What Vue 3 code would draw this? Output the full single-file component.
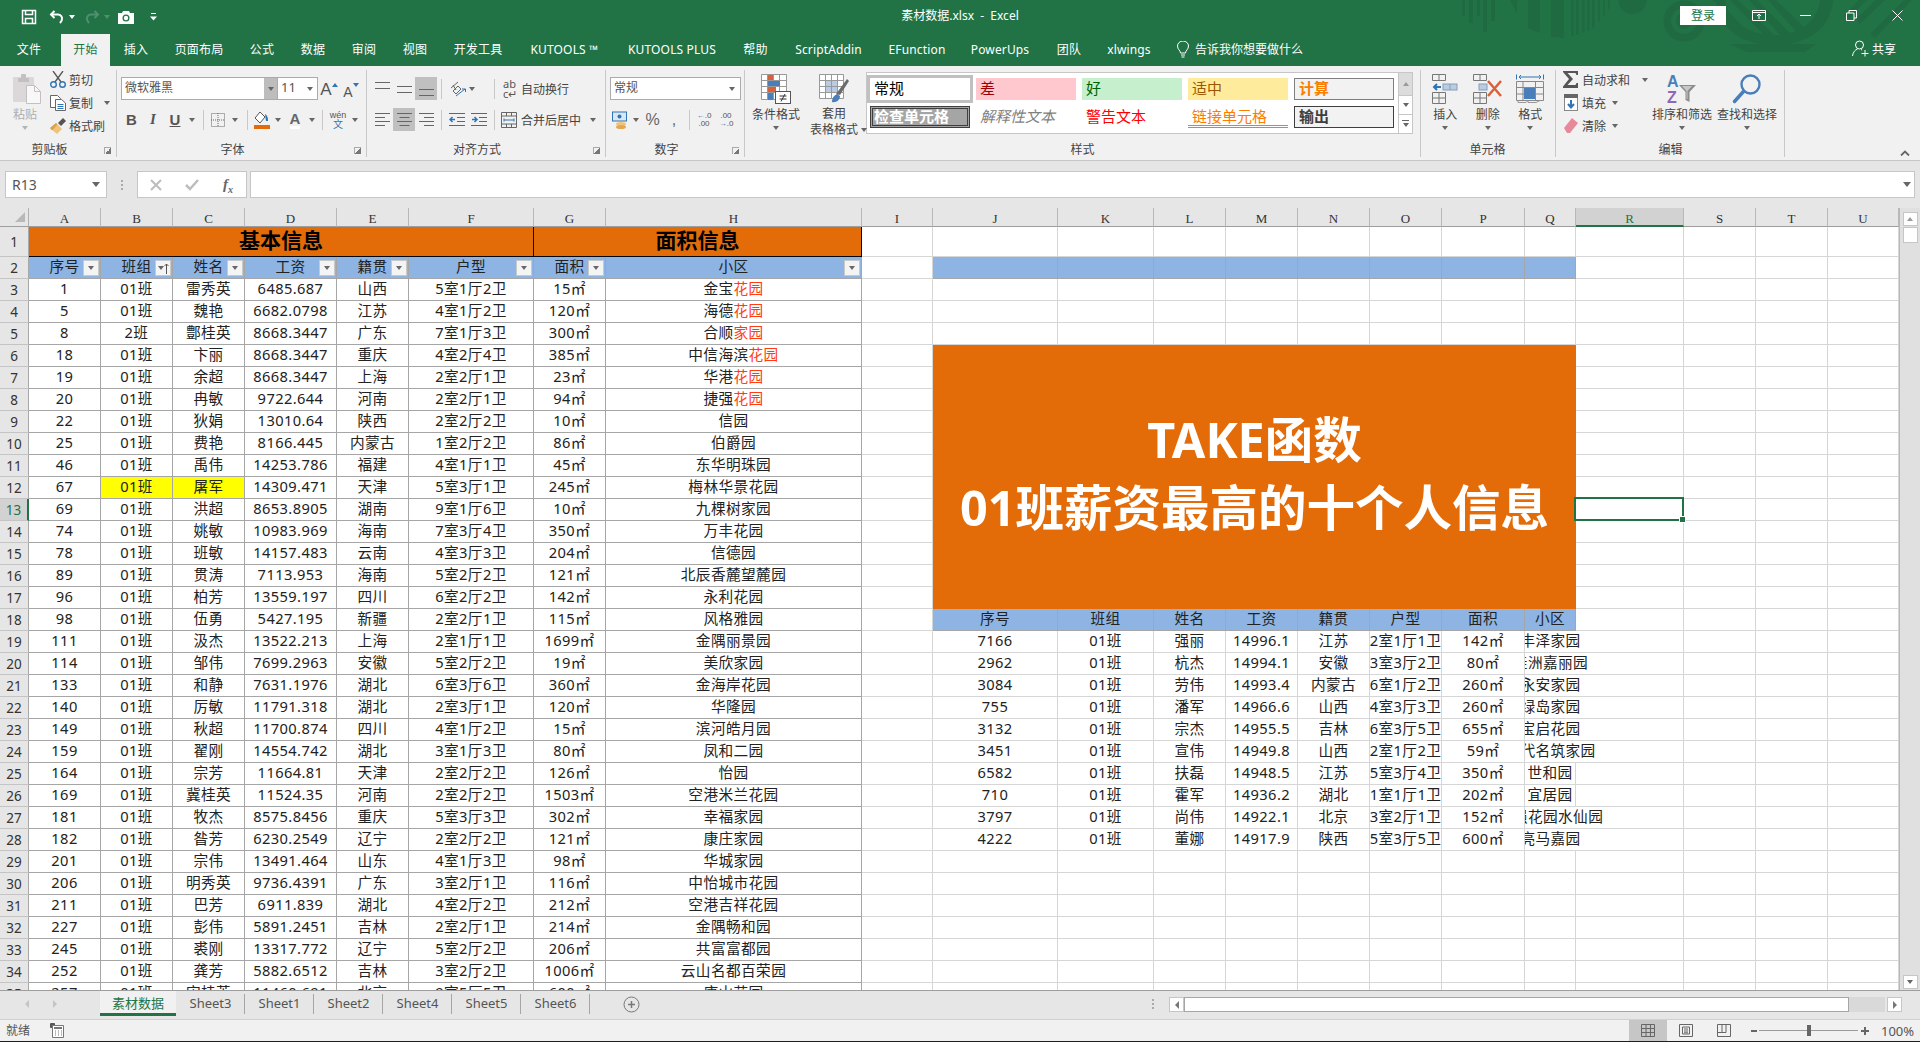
<script setup>
const tabs = [
  { name: '文件', w: 58 }, { name: '开始', w: 49, on: true }, { name: '插入', w: 48 }, { name: '页面布局', w: 74 },
  { name: '公式', w: 48 }, { name: '数据', w: 50 }, { name: '审阅', w: 48 }, { name: '视图', w: 50 },
  { name: '开发工具', w: 72 }, { name: 'KUTOOLS ™', w: 97 }, { name: 'KUTOOLS PLUS', w: 114 }, { name: '帮助', w: 49 },
  { name: 'ScriptAddin', w: 93 }, { name: 'EFunction', w: 80 }, { name: 'PowerUps', w: 82 }, { name: '团队', w: 52 },
  { name: 'xlwings', w: 64 }
]

const letters = 'ABCDEFGHIJKLMNOPQRSTU'.split('')

const sheetTabs = ['Sheet3', 'Sheet1', 'Sheet2', 'Sheet4', 'Sheet5', 'Sheet6']

// 素材数据 rows 3..35
const source = `1,01班,雷秀英,6485.687,山西,5室1厅2卫,15㎡,金宝,花园
5,01班,魏艳,6682.0798,江苏,4室1厅2卫,120㎡,海德,花园
8,2班,鄷桂英,8668.3447,广东,7室1厅3卫,300㎡,合顺,家园
18,01班,卞丽,8668.3447,重庆,4室2厅4卫,385㎡,中信海滨,花园
19,01班,余超,8668.3447,上海,2室2厅1卫,23㎡,华港,花园
20,01班,冉敏,9722.644,河南,2室2厅1卫,94㎡,捷强,花园
22,01班,狄娟,13010.64,陕西,2室2厅2卫,10㎡,信园
25,01班,费艳,8166.445,内蒙古,1室2厅2卫,86㎡,伯爵园
46,01班,禹伟,14253.786,福建,4室1厅1卫,45㎡,东华明珠园
67,01班,屠军,14309.471,天津,5室3厅1卫,245㎡,梅林华景花园
69,01班,洪超,8653.8905,湖南,9室1厅6卫,10㎡,九棵树家园
74,01班,姚敏,10983.969,海南,7室3厅4卫,350㎡,万丰花园
78,01班,班敏,14157.483,云南,4室3厅3卫,204㎡,信德园
89,01班,贯涛,7113.953,海南,5室2厅2卫,121㎡,北辰香麓望麓园
96,01班,柏芳,13559.197,四川,6室2厅2卫,142㎡,永利花园
98,01班,伍勇,5427.195,新疆,2室2厅1卫,115㎡,风格雅园
111,01班,汲杰,13522.213,上海,2室1厅1卫,1699㎡,金隅丽景园
114,01班,邹伟,7699.2963,安徽,5室2厅2卫,19㎡,美欣家园
133,01班,和静,7631.1976,湖北,6室3厅6卫,360㎡,金海岸花园
140,01班,厉敏,11791.318,湖北,2室3厅1卫,120㎡,华隆园
149,01班,秋超,11700.874,四川,4室1厅2卫,15㎡,滨河皓月园
159,01班,翟刚,14554.742,湖北,3室1厅3卫,80㎡,凤和二园
164,01班,宗芳,11664.81,天津,2室2厅2卫,126㎡,怡园
169,01班,冀桂英,11524.35,河南,2室2厅2卫,1503㎡,空港米兰花园
181,01班,牧杰,8575.8456,重庆,5室3厅3卫,302㎡,幸福家园
182,01班,昝芳,6230.2549,辽宁,2室2厅2卫,121㎡,康庄家园
201,01班,宗伟,13491.464,山东,4室1厅3卫,98㎡,华城家园
206,01班,明秀英,9736.4391,广东,3室2厅1卫,116㎡,中怡城市花园
211,01班,巴芳,6911.839,湖北,4室2厅2卫,212㎡,空港吉祥花园
227,01班,彭伟,5891.2451,吉林,2室2厅1卫,214㎡,金隅畅和园
245,01班,裘刚,13317.772,辽宁,5室2厅2卫,206㎡,共富富都园
252,01班,龚芳,5882.6512,吉林,3室2厅2卫,1006㎡,云山名都百荣园
257,01班,宋桂英,11460.691,北京,9室5厅5卫,600㎡,康山花园`.split('\n').map(l => l.split(','))

// TAKE result, rows 19..28, columns J..Q
const result = `7166,01班,强丽,14996.1,江苏,2室1厅1卫,142㎡,丰泽家园
2962,01班,杭杰,14994.1,安徽,3室3厅2卫,80㎡,佳洲嘉丽园
3084,01班,劳伟,14993.4,内蒙古,6室1厅2卫,260㎡,永安家园
755,01班,潘军,14966.6,山西,4室3厅3卫,260㎡,绿岛家园
3132,01班,宗杰,14955.5,吉林,6室3厅5卫,655㎡,宝启花园
3451,01班,宣伟,14949.8,山西,2室1厅2卫,59㎡,现代名筑家园
6582,01班,扶磊,14948.5,江苏,5室3厅4卫,350㎡,世和园
710,01班,霍军,14936.2,湖北,1室1厅1卫,202㎡,宜居园
3797,01班,尚伟,14922.1,北京,3室2厅1卫,152㎡,金强花园水仙园
4222,01班,董娜,14917.9,陕西,5室3厅5卫,600㎡,亮马嘉园`.split('\n').map(l => l.split(','))

const srcHead = ['序号', '班组', '姓名', '工资', '籍贯', '户型', '面积', '小区']

function buildRow(n) {
  const cells = []
  const blank = count => { for (let i = 0; i < count; i++) cells.push({ text: '' }) }

  if (n === 1) {
    cells.push({ text: '基本信息', cls: 'title-cell span6' })
    cells.push({ text: '面积信息', cls: 'title-cell span2' })
    blank(13)
  } else if (n === 2) {
    srcHead.forEach((t, i) => cells.push({ text: t, cls: 'head', filter: i === 1 ? 'sort' : 'plain' }))
    blank(1)
    for (let i = 0; i < 8; i++) cells.push({ text: '', cls: 'head' })
    blank(4)
  } else {
    const d = source[n - 3]
    d.slice(0, 7).forEach((t, i) => cells.push({ text: t, cls: n === 12 && (i === 1 || i === 2) ? 'tb yellow' : 'tb' }))
    cells.push({ text: d[7], red: d.length > 8 ? d[8] : '', cls: 'tb' })
    blank(1)
    if (n === 6) {
      cells.push({ picture: true })
    } else if (n > 6 && n < 18) {
      // covered by the picture
    } else if (n === 18) {
      srcHead.forEach(t => cells.push({ text: t, cls: 'head' }))
    } else if (n > 18 && n < 29) {
      const r = result[n - 19]
      r.forEach((t, i) => cells.push({ text: t, cls: i === 7 ? (t.length > 3 ? 'spill nob' : 'spill') : '' }))
    } else {
      blank(8)
    }
    cells.push({ text: '', cls: n === 13 ? 'selected' : '' })
    blank(3)
  }
  return { n, cells }
}

const rows = []
for (let n = 1; n <= 35; n++) rows.push(buildRow(n))
</script>

<template>
  <div class="excel">
    <!-- title bar + tab strip share the green band -->
    <header class="band">
      <svg class="band-art" width="480" height="66" viewBox="0 0 480 66">
        <g fill="#1f6a41">
          <rect x="22" y="0" width="3" height="16" /><rect x="29" y="0" width="4" height="23" /><rect x="37" y="0" width="3" height="16" />
          <rect x="43" y="0" width="4" height="32" /><rect x="51" y="0" width="4" height="21" />
          <path d="M70 0h7v14zM88 0h12v33l-12-5z" />
          <path d="M111 0h13v38l-13-1z" />
          <path d="M131 0h2.500v36l-2.500 .5zM136 0h2.500v34l-2.500 1zM142 0h2.500v32l-2.500 1zM147 0h2.500v30l-2.500 1.500zM152 0h2.500v27l-2.500 2zM158 0h2v20l-2 3zM163 0h2v14l-2 3zM168 0h2v7l-2 3z" />
          <circle cx="192.500" cy="0" r="14" />
          <path fill-rule="evenodd" d="M244 0.500a20.500 20.500 0 1 0 .01 0zM244 8a13 13 0 1 1 -.01 0z" />
          <circle cx="244" cy="21" r="8" />
          <circle cx="244" cy="21" r="4.500" fill="#217346" />
          <path d="M272 0h6c8 18 20 34 38 41l-28-30zM290 0h8l45 44h-10zM309 0h8l40 40-9 4zM328 0h8l32 31-7 6z" />
          <path d="M272 0h4c4 30 26 45 59 45s56-17 58-45h-13c-2 21-20 35-45 35s-48-13-50-35z" />
          <path d="M290 44h86l-11 8h-58z" />
          <path d="M404 15l15-15h8l-19 19zM416 19l20-19h9l-25 24zM430 34l34-34h8l-37 38z" />
        </g>
      </svg>

      <div class="titlebar">
        <div class="qat">
          <svg width="16" height="16" viewBox="0 0 16 16" fill="none" stroke="#fff" stroke-width="1.500"><path d="M1.500 1.500h13v13h-13z" /><path d="M4.500 1.500v4h7v-4" /><path d="M4.500 14.500v-5h7v5" /></svg>
          <span class="qat-undo">
            <svg width="16" height="14" viewBox="0 0 16 14" fill="none" stroke="#fff" stroke-width="2"><path d="M5.500 1l-3.500 3.500 3.500 3.500" /><path d="M2 4.500h7a4 4 0 0 1 4 4.500c0 1.500-1 3-2 4" /></svg>
            <i class="caret white"></i>
          </span>
          <span class="qat-redo">
            <svg width="16" height="14" viewBox="0 0 16 14" fill="none" stroke="#4f9070" stroke-width="2"><path d="M10.500 1l3.500 3.500-3.500 3.500" /><path d="M14 4.500h-7a4 4 0 0 0-4 4.500c0 1.500 1 3 2 4" /></svg>
            <i class="caret dim"></i>
          </span>
          <svg class="qat-cam" width="16" height="14" viewBox="0 0 16 14"><path fill="#fff" d="M0 3h4l1-2h6l1 2h4v11h-16z" /><circle cx="8" cy="8" r="3.500" fill="#217346" /><circle cx="8" cy="8" r="2.200" fill="#fff" /></svg>
          <svg class="qat-more" width="7" height="9" viewBox="0 0 7 9" fill="#fff"><rect x="1" y="0" width="5" height="1" /><path d="M0 3.500h7l-3.500 4z" /></svg>
        </div>
        <div class="doc-name">素材数据.xlsx&nbsp; - &nbsp;Excel</div>
        <div class="win">
          <span class="login">登录</span>
          <span class="win-btn">
            <svg width="14" height="11" viewBox="0 0 14 11" fill="none" stroke="#fff"><path d="M.5 .5h13v10h-13z" /><path d="M.5 2.500h13" /><path d="M7 9v-5M5 6l2-2 2 2" /></svg>
          </span>
          <span class="win-btn"><svg width="11" height="11" viewBox="0 0 11 11" stroke="#fff"><path d="M0 5.500h11" /></svg></span>
          <span class="win-btn">
            <svg width="11" height="11" viewBox="0 0 11 11" fill="none" stroke="#fff"><path d="M.5 3h7.500v7.500h-7.500z" /><path d="M3 3v-2.500h7.500v7.500h-2.500" /></svg>
          </span>
          <span class="win-btn"><svg width="11" height="11" viewBox="0 0 11 11" stroke="#fff"><path d="M.5 .5l10 10M10.500 .5l-10 10" /></svg></span>
        </div>
      </div>

      <nav class="tabstrip">
        <span v-for="t in tabs" :key="t.name" class="tab" :class="{ on: t.on }" :style="{ width: t.w + 'px' }">{{ t.name }}</span>
        <span class="tell">
          <svg width="12" height="17" viewBox="0 0 12 17" fill="none" stroke="#fff"><path d="M3.500 12c0-2.500-3-3.500-3-7a5.500 5 0 0 1 11 0c0 3.500-3 4.500-3 7z" /><path d="M4 14h4M4.500 16h3" /></svg>
          告诉我你想要做什么
        </span>
        <span class="share">
          <svg width="17" height="17" viewBox="0 0 17 17" fill="none" stroke="#fff"><circle cx="7.500" cy="5" r="4" /><path d="M.5 16c.5-4 2.500-6 5-7M9 9.500l1 .5" /><path d="M13 10v6.500M9.500 13.500h7" /></svg>
          共享
        </span>
      </nav>
    </header>

    <!-- ribbon -->
    <section class="ribbon">
      <div class="group g-clip">
        <div class="body row">
          <div class="big paste">
            <svg width="28" height="30" viewBox="0 0 28 30">
              <rect x="0" y="3" width="21" height="25" rx="1" fill="#dcd8da" />
              <path d="M5 4h11v4h-11z" fill="#c4c0c2" /><rect x="8" y="0" width="5" height="5" rx="1" fill="#c4c0c2" />
              <path d="M13.500 11.500h8l6 6v12h-14z" fill="#f8f8f8" stroke="#c4c0c2" /><path d="M21.500 11.500v6h6" fill="none" stroke="#c4c0c2" />
            </svg>
            <span class="big-text muted">粘贴</span>
            <i class="caret light"></i>
          </div>
          <div class="smalls">
            <div class="small">
              <svg width="16" height="17" viewBox="0 0 16 17" fill="none"><path d="M3 0l8 11M13 0l-8 11" stroke="#555" stroke-width="1.300" /><circle cx="3.500" cy="13.500" r="2.800" stroke="#2f75b5" stroke-width="1.400" /><circle cx="12.500" cy="13.500" r="2.800" stroke="#2f75b5" stroke-width="1.400" /></svg>
              <span>剪切</span>
            </div>
            <div class="small">
              <svg width="16" height="16" viewBox="0 0 16 16" fill="#fff" stroke="#666"><path d="M.5 .5h7l3 3v9h-10z" /><path d="M5.500 4.500h6l4 3.500v7.500h-10z" /><path d="M7.500 9.500h6M7.500 11.500h6M7.500 13.500h6" stroke="#2f75b5" /></svg>
              <span>复制</span>
              <i class="caret gap16"></i>
            </div>
            <div class="small">
              <svg width="16" height="16" viewBox="0 0 16 16"><path d="M0 10l6-5 6 6-5 5z" fill="#f0c27a" /><path d="M0 10l6-5 1.500 1.500-5.500 6z" fill="#d9a24d" /><path d="M8 5l5-5 3 3-5 5z" fill="#555" /></svg>
              <span>格式刷</span>
            </div>
          </div>
        </div>
        <div class="label">剪贴板<i class="launch"></i></div>
      </div>

      <div class="group g-font">
        <div class="body rows">
          <div class="tool-row">
            <div class="combo font-name"><span class="combo-text">微软雅黑</span><span class="combo-drop"><i class="caret"></i></span></div>
            <div class="combo font-size"><span class="combo-text">11</span><i class="caret"></i></div>
            <span class="slot w22 grow-a">A<svg width="6" height="4" viewBox="0 0 6 4"><path d="M0 4l3-4 3 4z" fill="#2f75b5" /></svg></span>
            <span class="slot w22 grow-a small-a">A<svg width="6" height="4" viewBox="0 0 6 4"><path d="M0 0l3 4 3-4z" fill="#2f75b5" /></svg></span>
          </div>
          <div class="tool-row">
            <span class="slot w21 letter bold">B</span>
            <span class="slot w22 letter ital">I</span>
            <span class="slot w22 letter under">U</span>
            <span class="slot w12"><i class="caret"></i></span>
            <span class="slot w11"><i class="sep"></i></span>
            <span class="slot w18">
              <svg width="14" height="14" viewBox="0 0 14 14" fill="none" stroke="#666" stroke-dasharray="1 1"><path d="M.5 .5h13v13h-13zM7 0v14M0 7h14" /></svg>
            </span>
            <span class="slot w16"><i class="caret"></i></span>
            <span class="slot w8"><i class="sep"></i></span>
            <span class="slot w21">
              <svg width="16" height="18" viewBox="0 0 16 18"><path d="M6 1l5 5-5 6-5-5z" fill="#fff" stroke="#555" /><path d="M11 3c2 1 3 3 3 7h-2z" fill="#2f75b5" /><rect x="0" y="14" width="16" height="4" fill="#e36c09" /></svg>
            </span>
            <span class="slot w12"><i class="caret"></i></span>
            <span class="slot w22">
              <span class="font-color">A</span>
            </span>
            <span class="slot w12"><i class="caret"></i></span>
            <span class="slot w8"><i class="sep"></i></span>
            <span class="slot w24 wen"><em>wén</em><b>文</b></span>
            <span class="slot w10"><i class="caret"></i></span>
          </div>
        </div>
        <div class="label">字体<i class="launch"></i></div>
      </div>

      <div class="group g-align">
        <div class="body rows">
          <div class="tool-row">
            <span class="slot w22"><svg width="15" height="14" viewBox="0 0 15 14" stroke="#666"><path d="M0 .5h15M0 6.500h15" /></svg></span>
            <span class="slot w22"><svg width="15" height="14" viewBox="0 0 15 14" stroke="#666"><path d="M0 4.500h15M0 10.500h15" /></svg></span>
            <span class="slot w22 pressed"><svg width="15" height="14" viewBox="0 0 15 14" stroke="#666"><path d="M0 7.500h15M0 13.500h15" /></svg></span>
            <span class="slot w8"><i class="sep"></i></span>
            <span class="slot w36 orient">
              <svg width="17" height="16" viewBox="0 0 17 16" fill="none" stroke="#666"><path d="M1 7l7-6M3 10l5-5 3 3-5 5zM3 4l3 5" /><path d="M6 15l9-7" stroke="#2f75b5" /><path d="M12 8h3.500v3" stroke="#2f75b5" /></svg>
              <i class="caret"></i>
            </span>
            <span class="slot w9"></span>
            <span class="slot w8"><i class="sep"></i></span>
            <span class="slot w22 wrap-ic"><em>ab</em><em>c↵</em></span>
            <span class="cmd">自动换行</span>
          </div>
          <div class="tool-row">
            <span class="slot w22"><svg width="15" height="13" viewBox="0 0 15 13" stroke="#666"><path d="M0 .5h15M0 4.500h10M0 8.500h15M0 12.500h10" /></svg></span>
            <span class="slot w22 pressed"><svg width="15" height="13" viewBox="0 0 15 13" stroke="#666"><path d="M0 .5h15M2.500 4.500h10M0 8.500h15M2.500 12.500h10" /></svg></span>
            <span class="slot w22"><svg width="15" height="13" viewBox="0 0 15 13" stroke="#666"><path d="M0 .5h15M5 4.500h10M0 8.500h15M5 12.500h10" /></svg></span>
            <span class="slot w9"><i class="sep"></i></span>
            <span class="slot w22"><svg width="16" height="13" viewBox="0 0 16 13" fill="none" stroke="#666"><path d="M0 .5h16M8 4.500h8M8 8.500h8M0 12.500h16" /><path d="M6 6.500h-5M3.500 4l-2.500 2.500 2.500 2.500" stroke="#2f75b5" stroke-width="1.500" /></svg></span>
            <span class="slot w22"><svg width="16" height="13" viewBox="0 0 16 13" fill="none" stroke="#666"><path d="M0 .5h16M8 4.500h8M8 8.500h8M0 12.500h16" /><path d="M1 6.500h5M3.500 4l2.500 2.500-2.500 2.500" stroke="#2f75b5" stroke-width="1.500" /></svg></span>
            <span class="slot w8"><i class="sep"></i></span>
            <span class="slot w22"><svg width="16" height="16" viewBox="0 0 16 16" fill="none" stroke="#666"><path d="M.5 .5h15v15h-15zM0 4h16M0 12h16M5.500 0v4M10.500 0v4M5.500 12v4M10.500 12v4" /><path d="M3 8h10M3 6.500v3M13 6.500v3" stroke="#2f75b5" /></svg></span>
            <span class="cmd merge">合并后居中</span>
            <span class="slot w24"><i class="caret"></i></span>
          </div>
        </div>
        <div class="label">对齐方式<i class="launch"></i></div>
      </div>

      <div class="group g-num">
        <div class="body rows">
          <div class="tool-row">
            <div class="combo num-fmt"><span class="combo-text">常规</span><i class="caret"></i></div>
          </div>
          <div class="tool-row">
            <span class="slot w20">
              <svg width="16" height="18" viewBox="0 0 16 18"><rect x=".5" y="1" width="14" height="9" fill="#dbe6f3" stroke="#2f75b5" /><circle cx="7.500" cy="5.500" r="2" fill="#2f75b5" /><ellipse cx="9" cy="13" rx="5" ry="2" fill="#f0c27a" /><ellipse cx="9" cy="16" rx="5" ry="2" fill="#e0a84f" /></svg>
            </span>
            <span class="slot w12"><i class="caret"></i></span>
            <span class="slot w21 pct">%</span>
            <span class="slot w22 pct">,</span>
            <span class="slot w8"><i class="sep"></i></span>
            <span class="slot w22 dec"><em><u>←</u>.0</em><em>.00</em></span>
            <span class="slot w22 dec"><em>.00</em><em><u>→</u>.0</em></span>
          </div>
        </div>
        <div class="label">数字<i class="launch"></i></div>
      </div>

      <div class="group g-style">
        <div class="body row">
          <div class="big cond">
            <svg width="30" height="30" viewBox="0 0 30 30">
              <path d="M.5 .5h25v25h-25zM6.500 0v26M12.500 0v26M18.500 0v26M0 6.500h26M0 12.500h26M0 18.500h26" fill="#fff" stroke="#999" />
              <rect x="7" y="1" width="5" height="5" fill="#d9603b" /><rect x="7" y="7" width="12" height="5" fill="#4a7ebb" />
              <rect x="7" y="13" width="8" height="5" fill="#d9603b" /><rect x="7" y="19" width="5" height="7" fill="#4a7ebb" />
              <rect x="14.500" y="17.500" width="15" height="12" fill="#fff" stroke="#555" />
              <path d="M18.500 22h7M18.500 25h7M24 20l-4 7.500" stroke="#333" fill="none" />
            </svg>
            <span class="big-text">条件格式</span>
            <i class="caret"></i>
          </div>
          <div class="big cond">
            <svg width="30" height="30" viewBox="0 0 30 30">
              <path d="M.5 .5h24v24h-24z" fill="#fff" stroke="#999" /><rect x="6" y="6" width="13" height="13" fill="#b8cce4" />
              <path d="M0 6.500h25M0 12.500h25M0 18.500h25M6.500 0v25M12.500 0v25M18.500 0v25" stroke="#999" />
              <path d="M17 20l11-15 2 2-9 14z" fill="#6b6b6b" /><path d="M13 28c0-5 3-7 5-8l3 2c0 4-4 7-8 6z" fill="#4a7ebb" />
            </svg>
            <span class="big-text two">套用</span>
            <span class="big-text line2">表格格式<i class="caret"></i></span>
          </div>
          <div class="gallery">
            <div class="styles">
              <span class="st st-normal">常规</span><span class="st st-bad">差</span><span class="st st-good">好</span><span class="st st-neutral">适中</span><span class="st st-calc">计算</span>
              <span class="st st-check">检查单元格</span><span class="st st-note">解释性文本</span><span class="st st-warn">警告文本</span><span class="st st-link">链接单元格</span><span class="st st-out">输出</span>
            </div>
            <div class="gal-scroll">
              <span class="gal-btn up"><i class="tri-up"></i></span>
              <span class="gal-btn"><i class="caret"></i></span>
              <span class="gal-btn more"><b></b><i class="caret"></i></span>
            </div>
          </div>
        </div>
        <div class="label">样式</div>
      </div>

      <div class="group g-cells">
        <div class="body row">
          <div class="big cell-btn">
            <svg width="26" height="30" viewBox="0 0 26 30" fill="none">
              <path d="M.5 .5h13v6h-13zM7 .5v6M.5 18.500h13v11h-13zM7 18.500v11M.5 24h13" stroke="#777" />
              <rect x="11" y="10" width="14" height="6" fill="#b8cce4" stroke="#8a9db5" /><path d="M18 10v6" stroke="#8a9db5" />
              <path d="M9 13h-6M5 10l-3 3 3 3" stroke="#2f75b5" stroke-width="2" />
            </svg>
            <span class="big-text">插入</span>
            <i class="caret"></i>
          </div>
          <div class="big cell-btn">
            <svg width="30" height="30" viewBox="0 0 30 30" fill="none">
              <path d="M.5 .5h13v6h-13zM7 .5v6M.5 18.500h13v11h-13zM7 18.500v11M.5 24h13" stroke="#777" />
              <rect x="6" y="10" width="8" height="6" fill="#b8cce4" stroke="#8a9db5" />
              <path d="M15 7l13 15M28 7l-13 15" stroke="#d9603b" stroke-width="2.500" />
            </svg>
            <span class="big-text">删除</span>
            <i class="caret"></i>
          </div>
          <div class="big cell-btn">
            <svg width="28" height="30" viewBox="0 0 28 30" fill="none">
              <path d="M.5 .5v5M27.500 .5v5M3 3h22M3 3l2-2M3 3l2 2M25 3l-2-2M25 3l-2 2" stroke="#2f75b5" />
              <path d="M.5 7.500h27v19h-27zM7 7.500v19M19.500 7.500v19M.5 13.500h27M.5 20h27" stroke="#888" />
              <rect x="8" y="14" width="11" height="11" fill="#4a7ebb" />
              <path d="M2 27v1.500h8l2-2M12 27v1.500h8l4-2" stroke="#999" />
            </svg>
            <span class="big-text">格式</span>
            <i class="caret"></i>
          </div>
        </div>
        <div class="label">单元格</div>
      </div>

      <div class="group g-edit">
        <div class="body row">
          <div class="smalls edit-col">
            <div class="small">
              <svg width="16" height="17" viewBox="0 0 16 17"><path d="M0 0h15v4h-1.500l-1-2h-8l5.500 6-5.500 6h8l1-2h1.500v5h-15v-1.500l6-7.500-6-7z" fill="#555" /></svg>
              <span>自动求和</span><i class="caret gap10"></i>
            </div>
            <div class="small">
              <svg width="14" height="17" viewBox="0 0 14 17"><rect x=".5" y=".5" width="13" height="16" fill="#fff" stroke="#888" /><rect x="0" y="0" width="14" height="4" fill="#666" /><path d="M7 6v7M4 10l3 3.500 3-3.500" stroke="#2f75b5" stroke-width="2" fill="none" /></svg>
              <span>填充</span><i class="caret gap4"></i>
            </div>
            <div class="small">
              <svg width="14" height="15" viewBox="0 0 14 15"><path d="M0 10l8-10 6 5-8 10h-3z" fill="#e8899b" /></svg>
              <span>清除</span><i class="caret gap4"></i>
            </div>
          </div>
          <div class="big find-btn">
            <svg width="30" height="30" viewBox="0 0 30 30">
              <text x="0" y="13" class="sort-a">A</text><text x="0" y="29" class="sort-z">Z</text>
              <path d="M12 11h17l-6.500 7v10l-4-2v-8z" fill="#8c8c8c" /><path d="M15 12h10l-4.500 5v8h-1v-8z" fill="#c8c8c8" />
            </svg>
            <span class="big-text">排序和筛选</span>
            <i class="caret"></i>
          </div>
          <div class="big find-btn">
            <svg width="30" height="30" viewBox="0 0 30 30" fill="none">
              <circle cx="18.500" cy="10.500" r="9" stroke="#4a7ebb" stroke-width="2.400" />
              <path d="M11.500 17.500l-9 10" stroke="#4a7ebb" stroke-width="3.500" stroke-linecap="round" />
            </svg>
            <span class="big-text">查找和选择</span>
            <i class="caret"></i>
          </div>
        </div>
        <div class="label">编辑</div>
      </div>

      <div class="collapse">
        <svg width="10" height="6" viewBox="0 0 10 6" fill="none" stroke="#666" stroke-width="1.800"><path d="M1 5.500l4-4 4 4" /></svg>
      </div>
    </section>

    <!-- formula bar -->
    <section class="formula">
      <div class="namebox"><span>R13</span><i class="caret big-caret"></i></div>
      <div class="dots"><i></i><i></i><i></i></div>
      <div class="fx-box">
        <svg width="12" height="12" viewBox="0 0 12 12" stroke="#bdbdbd" stroke-width="2"><path d="M1 1l10 10M11 1l-10 10" /></svg>
        <svg width="14" height="12" viewBox="0 0 14 12" fill="none" stroke="#bdbdbd" stroke-width="2.500"><path d="M1 6l4 4 8-9" /></svg>
        <span class="fx">f<sub>x</sub></span>
      </div>
      <div class="fx-input"><i class="caret big-caret"></i></div>
    </section>

    <!-- sheet -->
    <section class="sheet">
      <div class="grid">
        <div class="corner"><svg width="10" height="10" viewBox="0 0 10 10"><path d="M0 10l10-10v10z" fill="#b9b9b9" /></svg></div>
        <div v-for="c in letters" :key="c" class="col-head" :class="{ cur: c === 'R' }">{{ c }}</div>
        <template v-for="r in rows" :key="r.n">
          <div class="row-head" :class="{ cur: r.n === 13 }">{{ r.n }}</div>
          <template v-for="(c, i) in r.cells" :key="i">
            <div v-if="c.picture" class="picture">
              <div>TAKE函数</div>
              <div>01班薪资最高的十个人信息</div>
            </div>
            <div v-else class="cell" :class="c.cls">
              <span>{{ c.text }}<em v-if="c.red" class="red">{{ c.red }}</em></span>
              <i v-if="c.filter" class="filter" :class="c.filter"><i class="caret"></i><svg v-if="c.filter === 'sort'" width="5" height="11" viewBox="0 0 5 11" fill="none" stroke="#555"><path d="M2.500 11v-10M.5 3l2-2 2 2" /></svg></i>
            </div>
          </template>
        </template>
      </div>
      <aside class="vscroll">
        <span class="v-btn"><i class="tri-up"></i></span>
        <span class="v-thumb"></span>
        <span class="v-track"></span>
        <span class="v-btn"><i class="caret"></i></span>
      </aside>
    </section>

    <!-- sheet tabs -->
    <section class="tabsbar">
      <div class="tab-nav">
        <i class="tri-left"></i><i class="tri-right"></i>
      </div>
      <span class="sheet-tab on">素材数据</span>
      <span v-for="s in sheetTabs" :key="s" class="sheet-tab">{{ s }}</span>
      <svg class="add" width="17" height="17" viewBox="0 0 17 17" fill="none" stroke="#777"><circle cx="8.500" cy="8.500" r="7.500" /><path d="M8.500 5v7M5 8.500h7" stroke-width="1.500" /></svg>
      <div class="dots tab-dots"><i></i><i></i><i></i></div>
      <div class="hscroll">
        <span class="h-btn"><i class="tri-left dark"></i></span>
        <span class="h-thumb"></span>
        <span class="h-track"></span>
        <span class="h-btn"><i class="tri-right dark"></i></span>
      </div>
    </section>

    <!-- status bar -->
    <footer class="status">
      <span class="ready">就绪</span>
      <svg width="14" height="15" viewBox="0 0 14 15"><rect x="0" y="0" width="5" height="5" rx="1" fill="#555" /><path d="M2.500 2.500h11v12h-11z" fill="#fff" stroke="#777" /><path d="M5 8h1M8 8h1M11 8h1M5 10h1M8 10h1M11 10h1M5 12h1M8 12h1M11 12h1" stroke="#777" /><rect x="4" y="4" width="8" height="2" fill="#777" /></svg>
      <div class="views">
        <span class="view on"><svg width="14" height="13" viewBox="0 0 14 13" fill="none" stroke="#666"><path d="M.5 .5h13v12h-13zM5 0v13M9.500 0v13M0 4.500h14M0 8.500h14" /></svg></span>
        <span class="view"><svg width="14" height="13" viewBox="0 0 14 13" fill="none" stroke="#666"><path d="M.5 .5h13v12h-13zM3.500 3h7v7h-7zM5 5h4M5 7h4M5 8.800h4" /></svg></span>
        <span class="view"><svg width="14" height="13" viewBox="0 0 14 13" fill="none" stroke="#666"><path d="M.5 .5h13v12h-13zM.5 8.500h8.500v-8M5 .5v8" /></svg></span>
      </div>
      <div class="zoom">
        <span class="z-minus"></span>
        <span class="z-track"><b></b></span>
        <span class="z-plus"></span>
        <span class="z-val">100%</span>
      </div>
    </footer>
  </div>
</template>

<style scoped>
.excel {
  width: 1920px;
  height: 1042px;
  display: flex;
  flex-direction: column;
  overflow: hidden;
  background: #1e1e1e;
  font-family: "Noto Sans", "Noto Sans CJK SC", sans-serif;
  font-size: 12px;
  color: #444;
}

em,
i {
  font-style: normal;
}

.caret {
  display: inline-block;
  width: 0;
  height: 0;
  border: 3.5px solid transparent;
  border-top: 4px solid #666;
  border-bottom: 0;
  flex: none;
}

.caret.white {
  border-top-color: #fff;
}

.caret.dim {
  border-top-color: #4f9070;
}

.caret.light {
  border-top-color: #b5b5b5;
}

.tri-up {
  display: inline-block;
  border: 3.5px solid transparent;
  border-bottom: 4px solid #9a9a9a;
  border-top: 0;
}

.tri-left {
  display: inline-block;
  border: 4px solid transparent;
  border-right: 4px solid #c4c4c4;
  border-left: 0;
}

.tri-right {
  display: inline-block;
  border: 4px solid transparent;
  border-left: 4px solid #c4c4c4;
  border-right: 0;
}

.tri-left.dark {
  border-right-color: #777;
}

.tri-right.dark {
  border-left-color: #777;
}

/* green band */
.band {
  position: relative;
  height: 66px;
  flex: none;
  background: #217346;
  color: #fff;
}

.band-art {
  position: absolute;
  top: 0;
  right: 0;
}

.titlebar {
  position: relative;
  height: 34px;
  box-sizing: border-box;
  padding-bottom: 4px;
  display: grid;
  grid-template-columns: 1fr auto 1fr;
  align-items: center;
}

.qat {
  display: flex;
  align-items: center;
  padding-left: 21px;
  margin-top: 4px;
}

.qat-undo,
.qat-redo {
  display: flex;
  align-items: center;
  gap: 4px;
}

.qat-undo {
  margin-left: 12px;
}

.qat-redo {
  margin-left: 9px;
}

.qat-cam {
  margin-left: 8px;
}

.qat-more {
  margin-left: 16px;
}

.doc-name {
  font-size: 12px;
  white-space: pre;
}

.win {
  display: flex;
  justify-content: flex-end;
  align-items: center;
}

.login {
  width: 46px;
  height: 19px;
  margin-right: 10px;
  background: #fff;
  color: #217346;
  text-align: center;
  line-height: 19px;
}

.win-btn {
  width: 46px;
  height: 30px;
  display: flex;
  align-items: center;
  justify-content: center;
}

.tabstrip {
  position: relative;
  height: 32px;
  display: flex;
  align-items: stretch;
  gap: 2px;
}

.tab {
  box-sizing: border-box;
  padding-bottom: 2px;
  display: flex;
  align-items: center;
  justify-content: center;
  white-space: nowrap;
  letter-spacing: 0.15px;
}

.tab:first-child {
  margin-right: 1px;
}

.tab.on {
  background: #f1f1f1;
  color: #217346;
}

.tell {
  display: flex;
  align-items: center;
  gap: 6px;
  margin-left: 14px;
  padding-bottom: 2px;
}

.share {
  margin-left: auto;
  display: flex;
  align-items: center;
  gap: 3px;
  padding: 0 24px 3px 0;
}

/* ribbon */
.ribbon {
  height: 95px;
  flex: none;
  box-sizing: border-box;
  display: flex;
  background: #f1f1f1;
  border-bottom: 1px solid #c6c6c6;
  padding-top: 4px;
}

.group {
  height: 87px;
  box-sizing: border-box;
  flex: none;
  display: flex;
  flex-direction: column;
  border-right: 1px solid #c8c8c8;
}

.g-clip { width: 117px; }
.g-font { width: 250px; padding-left: 4px; }
.g-align { width: 239px; padding-left: 4px; }
.g-num { width: 139px; padding-left: 4px; }
.g-style { width: 676px; padding-left: 2px; }
.g-cells { width: 135px; padding-left: 3px; }
.g-edit { width: 229px; padding-left: 7px; }

.body {
  flex: 1;
  min-height: 0;
}

.body.row {
  display: flex;
}

.body.rows {
  padding-top: 7px;
  display: flex;
  flex-direction: column;
  gap: 8px;
}

.label {
  position: relative;
  height: 14px;
  line-height: 14px;
  text-align: center;
  color: #444;
  flex: none;
}

.g-clip .label { padding-right: 17px; }
.g-font .label { padding-right: 22px; }
.g-align .label { padding-right: 22px; }
.g-num .label { padding-right: 21px; }
.g-style .label { padding-right: 2px; }
.g-cells .label { padding-right: 4px; }
.g-edit .label { padding-right: 6px; }

.launch {
  position: absolute;
  right: 5px;
  top: 4px;
  width: 7px;
  height: 7px;
  border-left: 1px solid #aaa;
  border-top: 1px solid #aaa;
  box-sizing: border-box;
  background: linear-gradient(135deg, transparent 50%, #777 50%);
}

.big {
  display: flex;
  flex-direction: column;
  align-items: center;
  padding-top: 4px;
  flex: none;
}

.big svg {
  height: 30px;
  flex: none;
}

.big-text {
  line-height: 16px;
  margin-top: 3px;
  white-space: nowrap;
}

.big .caret {
  margin-top: 3px;
}

.big-text.two {
  margin-top: 2px;
  line-height: 15px;
}

.big-text.line2 {
  margin-top: 1px;
  line-height: 15px;
  display: flex;
  align-items: center;
  position: relative;
}

.big-text.line2 .caret {
  margin: 0 0 0 3px;
  position: absolute;
  left: 100%;
  top: 6px;
}

.muted {
  color: #aeaeae;
}

.paste {
  width: 40px;
  margin-left: 5px;
}

.paste svg {
  margin-left: 4px;
}

.smalls {
  margin-left: 5px;
  margin-top: -2px;
  display: flex;
  flex-direction: column;
}

.small {
  height: 23px;
  display: flex;
  align-items: center;
  gap: 3px;
  white-space: nowrap;
}

.small svg {
  width: 16px;
  flex: none;
}

.gap16 {
  margin-left: 8px;
}

.gap10 {
  margin-left: 9px;
}

.gap4 {
  margin-left: 3px;
}

.tool-row {
  height: 23px;
  display: flex;
  align-items: center;
}

.combo {
  height: 23px;
  box-sizing: border-box;
  background: #fff;
  border: 1px solid #ababab;
  display: flex;
  align-items: center;
  font-size: 12px;
  line-height: 19px;
  color: #555;
}

.combo-text {
  flex: 1;
  padding: 0 0 2px 3px;
}

.font-name {
  width: 157px;
}

.combo-drop {
  width: 13px;
  height: 100%;
  background: #bdbdbd;
  display: flex;
  align-items: center;
  justify-content: center;
}

.font-size {
  width: 40px;
  border-left: 0;
  padding-right: 4px;
  font-size: 13px;
}

.num-fmt {
  width: 131px;
  padding-right: 5px;
}

.slot {
  height: 23px;
  display: inline-flex;
  align-items: center;
  justify-content: center;
  flex: none;
}

.w8 { width: 8px; }
.w9 { width: 9px; }
.w10 { width: 10px; }
.w11 { width: 11px; }
.w12 { width: 12px; }
.w16 { width: 16px; }
.w18 { width: 18px; }
.w20 { width: 20px; }
.w21 { width: 21px; }
.w22 { width: 22px; }
.w24 { width: 24px; }
.w36 { width: 36px; }

.sep {
  width: 1px;
  height: 20px;
  background: #c8c8c8;
}

.pressed {
  background: #c0c0c0;
}

.grow-a {
  font-family: "Liberation Sans", sans-serif;
  font-size: 17px;
  color: #555;
  align-items: flex-end;
  gap: 0;
}

.grow-a svg {
  margin-bottom: 13px;
}

.small-a {
  font-size: 14px;
}

.letter {
  font-family: "Liberation Sans", sans-serif;
  font-size: 15px;
  color: #555;
}

.bold {
  font-weight: 700;
}

.ital {
  font-family: "Liberation Serif", serif;
  font-style: italic;
  font-weight: 700;
}

.under {
  font-weight: 700;
  text-decoration: underline;
}

.font-color {
  font-family: "Liberation Sans", sans-serif;
  font-weight: 700;
  font-size: 15px;
  line-height: 15px;
  color: #666;
  border-bottom: 3px solid #fff;
}

.wen {
  flex-direction: column;
  line-height: 9px;
}

.wen em {
  font-size: 9px;
  font-family: "Liberation Sans", sans-serif;
  color: #555;
}

.wen b {
  font-size: 10px;
  font-weight: 400;
  color: #2f75b5;
}

.orient {
  justify-content: flex-start;
  padding-left: 5px;
  box-sizing: border-box;
  gap: 2px;
}

.wrap-ic {
  flex-direction: column;
  align-items: flex-start;
  padding-left: 5px;
  box-sizing: border-box;
  line-height: 10px;
  font-size: 11px;
  color: #555;
}

.cmd {
  margin-left: 1px;
  white-space: nowrap;
  font-size: 12px;
}

.merge {
  width: 60px;
}

.pct {
  font-family: "Liberation Sans", sans-serif;
  font-size: 16px;
  color: #666;
}

.dec {
  flex-direction: column;
  font-family: "Liberation Sans", sans-serif;
  font-size: 8px;
  line-height: 8px;
  color: #555;
}

.dec u {
  color: #2f75b5;
  text-decoration: none;
}

.cond {
  width: 58px;
}

.gallery {
  width: 547px;
  height: 62px;
  margin: 2px 0 0 3px;
  box-sizing: border-box;
  border: 1px solid #c6c6c6;
  background: #fff;
  display: flex;
  justify-content: space-between;
  flex: none;
}

.styles {
  padding: 5px 0 0 3px;
  display: grid;
  grid-template-columns: repeat(5, 100px);
  grid-template-rows: 22px 22px;
  gap: 6px;
}

.st {
  box-sizing: border-box;
  padding-left: 4px;
  font-size: 15px;
  line-height: 19px;
  white-space: nowrap;
  font-family: "Noto Sans CJK SC", sans-serif;
}

.st-normal {
  color: #000;
  outline: 3px solid #c0c0c0;
}

.st-bad {
  background: #ffc7ce;
  color: #9c0006;
}

.st-good {
  background: #c6efce;
  color: #006100;
}

.st-neutral {
  background: #ffeb9c;
  color: #9c5700;
}

.st-calc {
  background: #f2f2f2;
  border: 1px solid #7f7f7f;
  color: #fa7d00;
  font-weight: 700;
  line-height: 17px;
}

.st-check {
  background: #a5a5a5;
  border: 3px double #3f3f3f;
  color: #fff;
  font-weight: 700;
  padding-left: 1px;
  line-height: 14px;
}

.st-note {
  color: #7f7f7f;
  font-style: italic;
}

.st-warn {
  color: #ff0000;
}

.st-link {
  color: #fa7d00;
  border-bottom: 3px double #fa7d00;
}

.st-out {
  background: #f2f2f2;
  border: 1px solid #3f3f3f;
  color: #3f3f3f;
  font-weight: 700;
  line-height: 17px;
}

.gal-scroll {
  width: 13px;
  border-left: 1px solid #c6c6c6;
  display: flex;
  flex-direction: column;
}

.gal-btn {
  flex: 1;
  display: flex;
  flex-direction: column;
  align-items: center;
  justify-content: center;
  gap: 2px;
  border-bottom: 1px solid #c6c6c6;
}

.gal-btn.up {
  flex: 1.2;
  background: #dcdcdc;
}

.gal-btn:last-child {
  border-bottom: 0;
}

.gal-btn b {
  width: 7px;
  height: 1px;
  background: #666;
}

.cell-btn {
  width: 42.500px;
}

.edit-col {
  width: 89px;
  margin-left: 0;
}

.find-btn {
  width: 60px;
}

.find-btn + .find-btn {
  margin-left: 5px;
}

.sort-a {
  font: 700 16px "Liberation Sans", sans-serif;
  fill: #4a7ebb;
}

.sort-z {
  font: 700 16px "Liberation Sans", sans-serif;
  fill: #8e67b8;
}

.collapse {
  flex: 1;
  display: flex;
  align-items: flex-end;
  justify-content: flex-end;
  padding: 0 10px 4px 0;
}

/* formula bar */
.formula {
  height: 47px;
  flex: none;
  box-sizing: border-box;
  padding-top: 10px;
  display: flex;
  align-items: flex-start;
  background: #e6e6e6;
}

.namebox {
  margin-left: 5px;
  width: 102px;
  height: 27px;
  box-sizing: border-box;
  background: #fff;
  border: 1px solid #c6c6c6;
  display: flex;
  align-items: center;
  justify-content: space-between;
  padding: 0 6px;
  font-size: 14px;
  color: #555;
}

.big-caret {
  border-width: 4px;
  border-top-width: 5px;
  border-bottom: 0;
}

.dots {
  width: 30px;
  height: 27px;
  display: flex;
  flex-direction: column;
  align-items: center;
  justify-content: center;
  gap: 2px;
}

.dots i {
  width: 2px;
  height: 2px;
  background: #aaa;
}

.fx-box {
  width: 110px;
  height: 27px;
  box-sizing: border-box;
  background: #fff;
  border: 1px solid #c6c6c6;
  display: flex;
  align-items: center;
  padding-left: 12px;
  gap: 23px;
}

.fx {
  font-family: "Liberation Serif", serif;
  font-style: italic;
  font-weight: 700;
  font-size: 15px;
  color: #666;
  margin-left: 1px;
}

.fx sub {
  font-size: 10px;
  line-height: 0;
}

.fx-input {
  flex: 1;
  height: 27px;
  margin: 0 5px 0 3px;
  box-sizing: border-box;
  background: #fff;
  border: 1px solid #c6c6c6;
  display: flex;
  align-items: center;
  justify-content: flex-end;
  padding-right: 3px;
}

/* sheet */
.sheet {
  flex: 1;
  min-height: 0;
  display: flex;
  background: #fff;
  border-bottom: 1px solid #9e9e9e;
  box-sizing: border-box;
}

.grid {
  flex: none;
  width: 1899px;
  overflow: hidden;
  display: grid;
  grid-template-columns: 29px 72px 72px 72px 92px 72px 125px 72px 256px 71px 125px 96px 72px 72px 72px 72px 83px 51px 108px 72px 72px 71px;
  grid-template-rows: 19px 30px repeat(34, 22px);
  font-family: "Noto Sans", "Noto Sans CJK SC", sans-serif;
  font-size: 14.670px;
  letter-spacing: 0.4px;
  color: #222;
}

.corner {
  background: #e6e6e6;
  border-right: 1px solid #b0b0b0;
  border-bottom: 1px solid #9e9e9e;
  display: flex;
  align-items: center;
  justify-content: flex-end;
  padding-right: 3px;
}

.col-head {
  background: #e6e6e6;
  border-right: 1px solid #b8b8b8;
  border-bottom: 1px solid #9e9e9e;
  font-family: "Liberation Serif", serif;
  font-size: 13px;
  letter-spacing: 0;
  color: #333;
  text-align: center;
  line-height: 22px;
  box-sizing: border-box;
}

.col-head.cur {
  background: #d2d2d2;
  border-bottom: 2px solid #217346;
  color: #217346;
}

.row-head {
  background: #e6e6e6;
  border-right: 1px solid #a8a8a8;
  border-bottom: 1px solid #c4c4c4;
  font-size: 13.500px;
  letter-spacing: 0;
  color: #333;
  display: flex;
  align-items: center;
  justify-content: center;
  box-sizing: border-box;
}

.row-head.cur {
  background: #d2d2d2;
  border-right: 2px solid #217346;
  color: #217346;
}

.cell {
  position: relative;
  box-sizing: border-box;
  min-width: 0;
  padding-bottom: 2px;
  border-right: 1px solid #d6d6d6;
  border-bottom: 1px solid #d6d6d6;
  display: flex;
  align-items: center;
  justify-content: center;
  white-space: nowrap;
  overflow: hidden;
  line-height: 19px;
}

.cell span {
  flex: none;
}

.tb {
  border-color: #a6a6a6;
}

.yellow {
  background: #ffff00;
}

.red {
  color: #ff3c12;
}

.head {
  background: #8db4e2;
  border-color: #a6a6a6;
}

.title-cell {
  background: #e36c09;
  border-right: 1px solid #000;
  border-bottom: 1px solid #000;
  font-size: 21px;
  font-weight: 700;
  letter-spacing: 0;
  color: #000;
}

.span6 {
  grid-column: span 6;
}

.span2 {
  grid-column: span 2;
}

.filter {
  position: absolute;
  right: 1px;
  top: 3px;
  width: 16px;
  height: 16px;
  box-sizing: border-box;
  background: #f4f4f4;
  border: 1px solid #c9c9c9;
  display: flex;
  align-items: center;
  justify-content: center;
}

.spill {
  overflow: visible;
  clip-path: inset(0 -60px 0 0);
  z-index: 1;
}

.nob {
  border-right: 0;
}

.selected {
  overflow: visible;
  z-index: 2;
}

.selected::before {
  content: "";
  position: absolute;
  left: -2px;
  top: -2px;
  right: -1px;
  bottom: -1px;
  border: 2px solid #217346;
}

.selected::after {
  content: "";
  position: absolute;
  right: -3px;
  bottom: -3px;
  width: 5px;
  height: 5px;
  background: #217346;
  border: 1px solid #fff;
}

.picture {
  grid-column: span 8;
  grid-row: span 12;
  box-sizing: border-box;
  padding-bottom: 8px;
  background: #e36c09;
  color: #fff;
  font-weight: 700;
  font-size: 48.500px;
  letter-spacing: 0;
  line-height: 68px;
  white-space: nowrap;
  display: flex;
  flex-direction: column;
  align-items: center;
  justify-content: center;
}

.vscroll {
  flex: 1;
  display: flex;
  flex-direction: column;
  align-items: center;
  background: #e0e0e0;
  border-left: 1px solid #b8b8b8;
  padding: 4px 0 1px;
}

.v-btn {
  width: 15px;
  height: 14px;
  flex: none;
  box-sizing: border-box;
  background: #fff;
  border: 1px solid #c6c6c6;
  display: flex;
  align-items: center;
  justify-content: center;
}

.v-thumb {
  width: 15px;
  height: 16px;
  flex: none;
  box-sizing: border-box;
  margin-top: 1px;
  background: #fff;
  border: 1px solid #c6c6c6;
}

.v-track {
  flex: 1;
}

/* sheet tabs */
.tabsbar {
  height: 28px;
  flex: none;
  display: flex;
  align-items: flex-start;
  background: #e6e6e6;
  font-size: 13px;
  color: #555;
}

.tab-nav {
  width: 100px;
  height: 26px;
  display: flex;
  align-items: center;
  padding-left: 25px;
  box-sizing: border-box;
  gap: 24px;
}

.sheet-tab {
  width: 69px;
  height: 25px;
  box-sizing: border-box;
  padding-bottom: 2px;
  display: flex;
  align-items: center;
  justify-content: center;
  position: relative;
}

.sheet-tab:not(.on)::after {
  content: "";
  position: absolute;
  right: 0;
  top: 3px;
  bottom: 2px;
  width: 1px;
  background: #a6a6a6;
}

.sheet-tab.on {
  width: 76px;
  padding-bottom: 0;
  background: #f1f1f1;
  color: #217346;
  border-bottom: 3px solid #217346;
}

.add {
  margin: 5px 0 0 33px;
}

.tab-dots {
  margin-left: 498px;
  height: 26px;
}

.hscroll {
  margin-left: 1px;
  margin-top: 6px;
  display: flex;
  align-items: stretch;
  width: 733px;
  height: 15px;
}

.h-btn {
  width: 15px;
  flex: none;
  box-sizing: border-box;
  background: #fff;
  border: 1px solid #c6c6c6;
  display: flex;
  align-items: center;
  justify-content: center;
}

.h-thumb {
  width: 665px;
  flex: none;
  box-sizing: border-box;
  background: #fff;
  border: 1px solid #a6a6a6;
}

.h-track {
  flex: 1;
  margin-right: 2px;
  background: #d9d9d9;
}

/* status */
.status {
  height: 22px;
  flex: none;
  margin-bottom: 1px;
  box-sizing: border-box;
  border-top: 1px solid #d0d0d0;
  background: #f1f1f1;
  display: flex;
  align-items: center;
  color: #555;
}

.ready {
  margin: 0 20px 0 6px;
  padding-bottom: 2px;
}

.views {
  margin-left: auto;
  display: flex;
  height: 100%;
}

.view {
  width: 38px;
  display: flex;
  align-items: center;
  justify-content: center;
}

.view.on {
  background: #c6c6c6;
}

.zoom {
  width: 177px;
  flex: none;
  display: flex;
  align-items: center;
  padding-left: 8px;
  box-sizing: border-box;
}

.z-minus {
  width: 6px;
  height: 2px;
  background: #666;
}

.z-track {
  position: relative;
  width: 99px;
  height: 1px;
  margin-left: 2px;
  background: #9a9a9a;
}

.z-track b {
  position: absolute;
  left: 48px;
  top: -5px;
  width: 4px;
  height: 11px;
  background: #666;
}

.z-plus {
  position: relative;
  width: 8px;
  height: 2px;
  margin-left: 3px;
  background: #666;
}

.z-plus::after {
  content: "";
  position: absolute;
  left: 3px;
  top: -3px;
  width: 2px;
  height: 8px;
  background: #666;
}

.z-val {
  margin-left: 12px;
  font-size: 13px;
  color: #555;
}
</style>

<style>
html,
body {
  margin: 0;
  overflow: hidden;
}
</style>
